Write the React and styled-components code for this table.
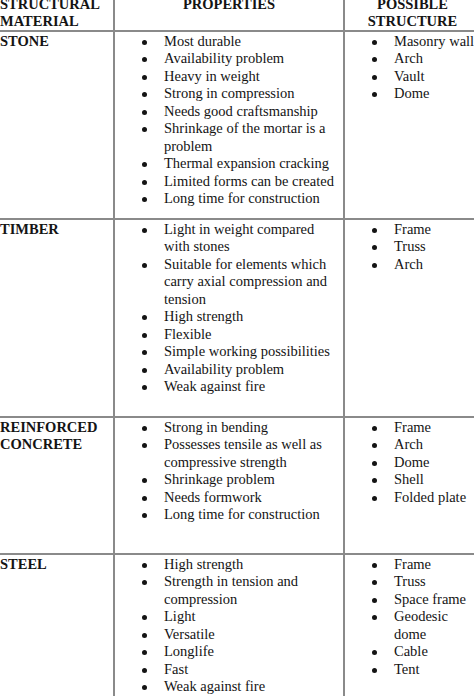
import styled, { createGlobalStyle } from 'styled-components';

const rows = [
  {
    material: 'STONE',
    height: 188,
    properties: [
      'Most durable',
      'Availability problem',
      'Heavy in weight',
      'Strong in compression',
      'Needs good craftsmanship',
      'Shrinkage of the mortar is a problem',
      'Thermal expansion cracking',
      'Limited forms can be created',
      'Long time for construction',
    ],
    structures: ['Masonry wall', 'Arch', 'Vault', 'Dome'],
  },
  {
    material: 'TIMBER',
    height: 198,
    properties: [
      'Light in weight compared with stones',
      'Suitable for elements which carry axial compression and tension',
      'High strength',
      'Flexible',
      'Simple working possibilities',
      'Availability problem',
      'Weak against fire',
    ],
    structures: ['Frame', 'Truss', 'Arch'],
  },
  {
    material: 'REINFORCED CONCRETE',
    height: 137,
    properties: [
      'Strong in bending',
      'Possesses tensile as well as compressive strength',
      'Shrinkage problem',
      'Needs formwork',
      'Long time for construction',
    ],
    structures: ['Frame', 'Arch', 'Dome', 'Shell', 'Folded plate'],
  },
  {
    material: 'STEEL',
    height: 160,
    properties: [
      'High strength',
      'Strength in tension and compression',
      'Light',
      'Versatile',
      'Longlife',
      'Fast',
      'Weak against fire',
    ],
    structures: [
      'Frame',
      'Truss',
      'Space frame',
      'Geodesic dome',
      'Cable',
      'Tent',
    ],
  },
];

const App = () => {
  const renderList = (items) => (
    <List>
      {items.map((item, index) => (
        <Item key={index}>{item}</Item>
      ))}
    </List>
  );

  return (
    <>
      <GlobalStyle />
      <Page>
        <Table>
          <Row $height={34} $first>
            <Cell>
              <Heading>
                STRUCTURAL
                <br />
                MATERIAL
              </Heading>
            </Cell>
            <Cell $divider>
              <Heading $align='center'>PROPERTIES</Heading>
            </Cell>
            <Cell $divider>
              <Heading $align='center'>
                POSSIBLE
                <br />
                STRUCTURE
              </Heading>
            </Cell>
          </Row>
          {rows.map((row) => (
            <Row key={row.material} $height={row.height}>
              <Cell $pad>
                <Material>{row.material}</Material>
              </Cell>
              <Cell $divider $pad>
                {renderList(row.properties)}
              </Cell>
              <Cell $divider $pad>
                {renderList(row.structures)}
              </Cell>
            </Row>
          ))}
        </Table>
      </Page>
    </>
  );
};

export default App;

const GlobalStyle = createGlobalStyle`
  html, body {
    margin: 0;
    padding: 0;
    background: #ffffff;
  }
  body {
    font-family: 'Liberation Serif', 'Times New Roman', serif;
    font-size: 14.5px;
    line-height: 17.45px;
    color: #141414;
  }
`;

const Page = styled.div`
  width: 474px;
  height: 696px;
  overflow: hidden;
  background: #ffffff;
`;

const Table = styled.div`
  width: 480px;
  margin-top: -4px;
`;

const Row = styled.div`
  display: grid;
  grid-template-columns: 113px 230px 137px;
  box-sizing: border-box;
  height: ${(props) => props.$height}px;
  border-top: ${(props) => (props.$first ? 'none' : '2px solid #8a8a8a')};
`;

const Cell = styled.div`
  box-sizing: border-box;
  min-width: 0;
  padding-top: ${(props) => (props.$pad ? '1px' : '0')};
  border-left: ${(props) => (props.$divider ? '2px solid #8a8a8a' : 'none')};
`;

const Heading = styled.div`
  font-weight: bold;
  text-align: ${(props) => props.$align || 'left'};
`;

const Material = styled.div`
  font-weight: bold;
`;

const List = styled.ul`
  list-style: none;
  margin: 0;
  padding: 0 5px 0 0;
`;

const Item = styled.li`
  display: flex;

  &::before {
    content: '';
    flex: none;
    width: 5px;
    height: 5px;
    margin: 7px 17px 0 27px;
    border-radius: 50%;
    background: #141414;
  }
`;
